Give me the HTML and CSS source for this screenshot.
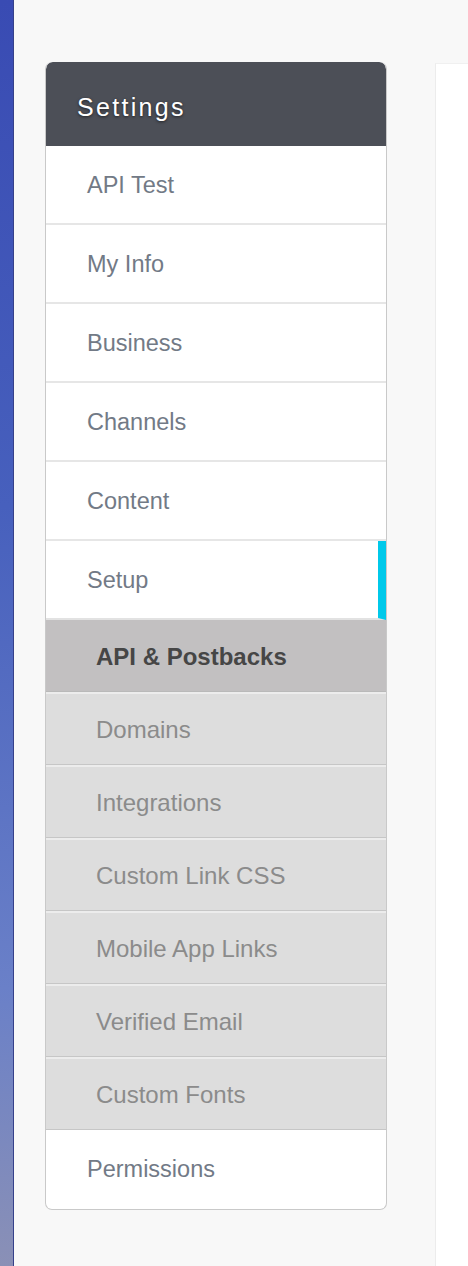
FILE: index.html
```html
<!DOCTYPE html>
<html lang="en">
<head>
<meta charset="utf-8">
<title>Settings</title>
<link rel="stylesheet" href="styles.css">
</head>
<body>
<div class="page">
  <div class="strip"></div>
  <main class="main">
    <nav class="card">
      <div class="card-head">Settings</div>
      <a class="item">API Test</a>
      <a class="item">My Info</a>
      <a class="item">Business</a>
      <a class="item">Channels</a>
      <a class="item">Content</a>
      <a class="item item-active">Setup</a>
      <div class="sub">
        <a class="sub-item sub-current">API &amp; Postbacks</a>
        <a class="sub-item">Domains</a>
        <a class="sub-item">Integrations</a>
        <a class="sub-item">Custom Link CSS</a>
        <a class="sub-item">Mobile App Links</a>
        <a class="sub-item">Verified Email</a>
        <a class="sub-item">Custom Fonts</a>
      </div>
      <a class="item item-last">Permissions</a>
    </nav>
    <section class="panel"></section>
  </main>
</div>
</body>
</html>
```

FILE: styles.css
```css
* { box-sizing: border-box; }
html, body { margin: 0; padding: 0; height: 100%; }
body {
  font-family: "Liberation Sans", Arial, sans-serif;
  background: #f8f8f8;
}
.page {
  display: flex;
  min-height: 1266px;
}
.strip {
  width: 14px;
  flex: none;
  background: linear-gradient(to bottom, #394bb3 0%, #4760bd 40%, #6a80c8 78%, #8a90b6 100%);
  border-right: 1px solid #36418a;
}
.main {
  flex: 1;
  display: flex;
  align-items: flex-start;
  gap: 48px;
  padding: 62px 0 0 31px;
  background: #f8f8f8;
}
.card {
  width: 342px;
  flex: none;
  display: flex;
  flex-direction: column;
  background: #fff;
  border: 1px solid #c9c9c9;
  border-top: 0;
  border-radius: 7px;
  overflow: hidden;
}
.card-head {
  height: 84px;
  background: #4c4f57;
  color: #fff;
  font-size: 25px;
  letter-spacing: 2.3px;
  padding: 6px 0 0 31px;
  display: flex;
  align-items: center;
  text-shadow: 0 1px 3px rgba(0, 0, 0, 0.6);
  border-radius: 7px 7px 0 0;
}
.item {
  height: 79px;
  display: flex;
  align-items: center;
  padding: 2px 0 0 41px;
  font-size: 23.5px;
  color: #727a86;
  border-bottom: 2px solid #e6e6e6;
  text-decoration: none;
}
.item-active {
  border-right: 8px solid #00c9ea;
  border-bottom: 2px solid #e2e2e2;
}
.item-last {
  border-bottom: 0;
  height: 79px;
  padding-top: 0;
}
.sub {
  display: flex;
  flex-direction: column;
}
.sub-item {
  height: 73px;
  display: flex;
  align-items: center;
  padding: 2px 0 0 50px;
  font-size: 24px;
  color: #8b8b8b;
  background: #dddddd;
  border-top: 2px solid #ececec;
  border-bottom: 1px solid #c6c6c6;
  text-decoration: none;
}
.sub-current {
  background: #c2c0c1;
  color: #464646;
  font-weight: bold;
  border-top: 0;
  height: 72px;
  border-bottom: 1px solid #b9b9b9;
}
.panel {
  flex: 1;
  align-self: stretch;
  margin-top: 1px;
  background: #fff;
  border-left: 1px solid #ececec;
  border-top: 1px solid #f0f0f0;
}
```
